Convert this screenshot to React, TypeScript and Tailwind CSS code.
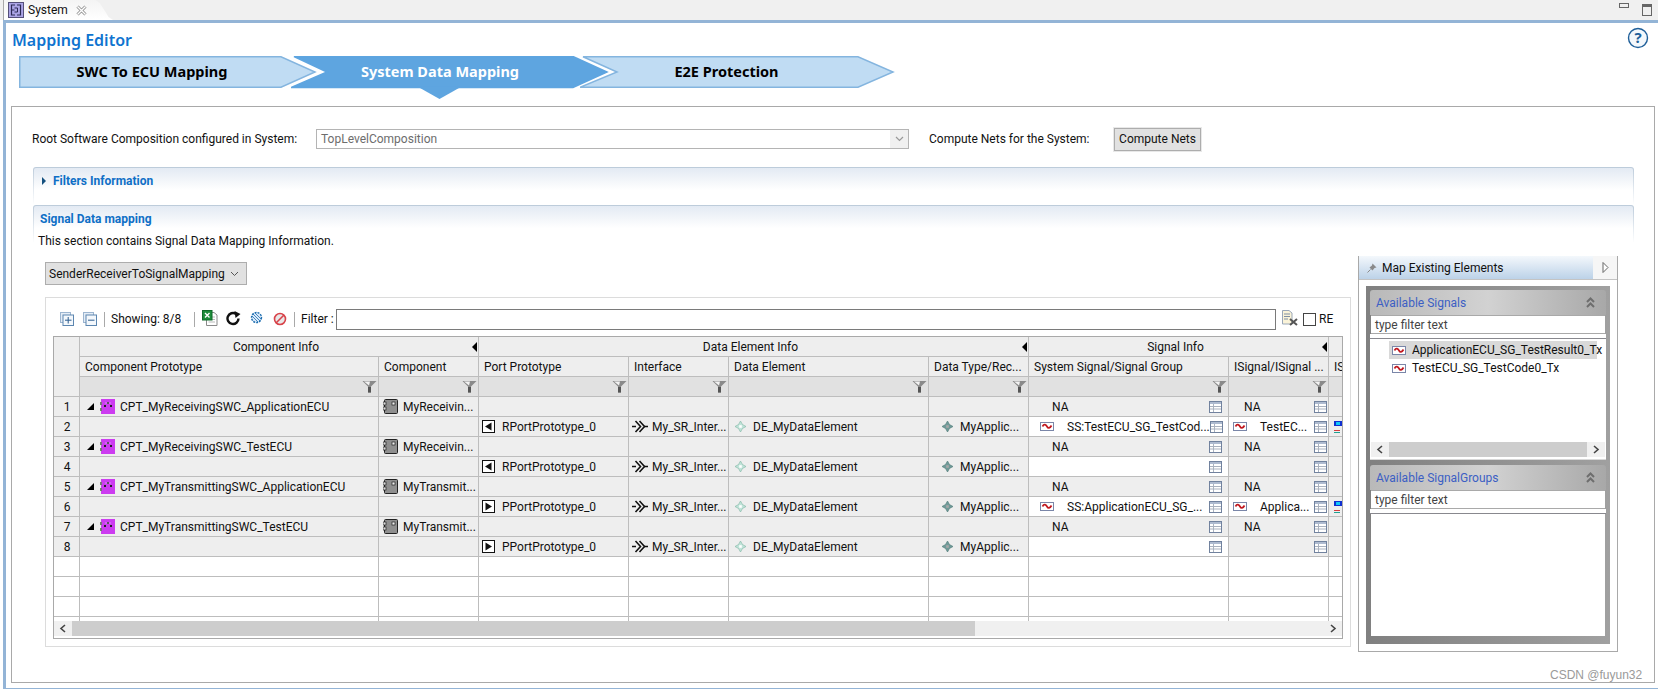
import React from "react";

const font = { fontFamily: 'Roboto, "Noto Sans", sans-serif' };
const headFont = { fontFamily: '"Noto Sans", Roboto, sans-serif' };

function Funnel() {
  return (
    <svg width="15" height="13" viewBox="0 0 15 13" className="shrink-0">
      <path d="M0.5 1 L14.5 1 L9 6.5 L9 12.5 L6 12.5 L6 6.5 Z" fill="#8a8a8a" />
      <path d="M2 1.5 L8 1.5 L7 5.5 Z" fill="#f2f2f2" />
      <path d="M6 7 L9 7 L9 12.5 L6 12.5 Z" fill="#555" />
    </svg>
  );
}

function TableIcon() {
  return (
    <svg width="13" height="12" viewBox="0 0 13 12" className="shrink-0">
      <rect x="0.5" y="0.5" width="12" height="11" fill="#fff" stroke="#71829e" />
      <rect x="1" y="1" width="11" height="2" fill="#aebbd0" />
      <path d="M1 5.5 H12 M1 8 H12 M4.5 3 V11" stroke="#aab2bf" strokeWidth="1" />
    </svg>
  );
}

function SignalIcon() {
  return (
    <svg width="14" height="9" viewBox="0 0 14 9" className="shrink-0">
      <rect x="0.5" y="0.5" width="13" height="8" fill="#fff" stroke="#7a86a8" />
      <path d="M2.5 4.5 C4 1.5 6 2.5 7 4.5 C8 6.5 10 6.5 11.5 3.5" fill="none" stroke="#c0181f" strokeWidth="1.7" />
    </svg>
  );
}

function SwcIcon() {
  return (
    <svg width="15" height="15" viewBox="0 0 15 15" className="shrink-0">
      <rect x="1" y="0" width="14" height="15" fill="#cc3cf0" />
      <rect x="0" y="3" width="2" height="3" fill="#777" />
      <rect x="0" y="9" width="2" height="3" fill="#777" />
      <rect x="7" y="3" width="2" height="2" fill="#222" />
      <rect x="4" y="6" width="2" height="2" fill="#222" />
      <rect x="10" y="6" width="2" height="2" fill="#222" />
      <path d="M5 4 H11" stroke="#f0c0ff" strokeWidth="0.6" />
    </svg>
  );
}

function ComponentIcon() {
  return (
    <svg width="15" height="15" viewBox="0 0 15 15" className="shrink-0">
      <rect x="1.5" y="0.5" width="13" height="14" rx="1" fill="#8f8f8f" stroke="#222" />
      <rect x="9" y="3" width="3" height="3" fill="#eee" stroke="#222" strokeWidth="0.7" />
      <rect x="0" y="3" width="3" height="3" fill="#ddd" stroke="#222" strokeWidth="0.7" />
      <rect x="0" y="8" width="3" height="3" fill="#ddd" stroke="#222" strokeWidth="0.7" />
    </svg>
  );
}

function PortIcon({ dir }: { dir: "l" | "r" }) {
  return (
    <svg width="13" height="13" viewBox="0 0 13 13" className="shrink-0">
      <rect x="0.5" y="0.5" width="12" height="12" fill="#fff" stroke="#111" />
      {dir === "l" ? <path d="M3 6.5 L9.5 2.5 V10.5 Z" fill="#111" /> : <path d="M10 6.5 L3.5 2.5 V10.5 Z" fill="#111" />}
    </svg>
  );
}

function InterfaceIcon() {
  return (
    <svg width="16" height="13" viewBox="0 0 16 13" className="shrink-0">
      <path d="M0 6.5 H4 M12 6.5 H16" stroke="#111" strokeWidth="1.4" />
      <path d="M3.5 1 L8.5 6.5 L3.5 12 M7.5 1 L12.5 6.5 L7.5 12" fill="none" stroke="#111" strokeWidth="1.6" />
    </svg>
  );
}

function Diamond({ dark }: { dark?: boolean }) {
  return (
    <svg width="11" height="11" viewBox="0 0 11 11" className="shrink-0">
      <path
        d="M5.5 0 L7.5 3.5 L11 5.5 L7.5 7.5 L5.5 11 L3.5 7.5 L0 5.5 L3.5 3.5 Z"
        fill={dark ? "#6f9a98" : "#bfe3d8"}
        stroke={dark ? "#4f7a78" : "#7fb5a5"}
        strokeWidth="0.6"
      />
      <rect x="4.2" y="4.2" width="2.6" height="2.6" fill={dark ? "#a8a8a8" : "#fff"} />
    </svg>
  );
}

function Chevrons({ className }: { className?: string }) {
  return (
    <svg width="9" height="11" viewBox="0 0 9 11" className={className}>
      <path d="M1 5 L4.5 1.5 L8 5 M1 10 L4.5 6.5 L8 10" fill="none" stroke="#6e6e6e" strokeWidth="2" />
    </svg>
  );
}

const columns = [
  { w: "w-[299px]", label: "Component Prototype" },
  { w: "w-[100px]", label: "Component" },
  { w: "w-[150px]", label: "Port Prototype" },
  { w: "w-[100px]", label: "Interface" },
  { w: "w-[200px]", label: "Data Element" },
  { w: "w-[100px]", label: "Data Type/Rec..." },
  { w: "w-[200px]", label: "System Signal/Signal Group" },
  { w: "w-[100px]", label: "ISignal/ISignal ..." },
  { w: "w-[14px]", label: "IS" },
];

function Cell({ w, children, white, className = "" }: { w: string; children?: React.ReactNode; white?: boolean; className?: string }) {
  return (
    <div
      className={`${w} h-full shrink-0 border-r border-[#bdbdbd] flex items-center overflow-hidden whitespace-nowrap ${white ? "bg-white" : ""} ${className}`}
    >
      {children}
    </div>
  );
}

type Row =
  | { kind: "comp"; n: number; name: string; comp: string; isig: boolean }
  | { kind: "port"; n: number; dir: "l" | "r"; port: string; sig?: string; isig?: string };

const rows: Row[] = [
  { kind: "comp", n: 1, name: "CPT_MyReceivingSWC_ApplicationECU", comp: "MyReceivin...", isig: true },
  { kind: "port", n: 2, dir: "l", port: "RPortPrototype_0", sig: "SS:TestECU_SG_TestCod...", isig: "TestEC..." },
  { kind: "comp", n: 3, name: "CPT_MyReceivingSWC_TestECU", comp: "MyReceivin...", isig: true },
  { kind: "port", n: 4, dir: "l", port: "RPortPrototype_0" },
  { kind: "comp", n: 5, name: "CPT_MyTransmittingSWC_ApplicationECU", comp: "MyTransmit...", isig: true },
  { kind: "port", n: 6, dir: "r", port: "PPortPrototype_0", sig: "SS:ApplicationECU_SG_...", isig: "Applica..." },
  { kind: "comp", n: 7, name: "CPT_MyTransmittingSWC_TestECU", comp: "MyTransmit...", isig: true },
  { kind: "port", n: 8, dir: "r", port: "PPortPrototype_0" },
];

function IsCell({ show }: { show: boolean }) {
  return (
    <Cell w="w-[14px]" className="border-r-0 pl-[5px]">
      {show && (
        <div className="flex flex-col gap-[4px]">
          <div className="w-[8px] h-[5px] bg-[#10c8f8] border-x-2 border-y border-[#1030d0]" />
          <div className="w-[6px] h-[3px] border-t border-t-[#d04040] border-b border-b-[#20a090]" />
        </div>
      )}
    </Cell>
  );
}

function DataRow({ r }: { r: Row }) {
  return (
    <div className="flex h-[20px] border-b border-[#bdbdbd] box-border">
      <div className="w-[26px] shrink-0 h-full border-r border-[#bdbdbd] flex items-center justify-center bg-[#eeeeee] pl-[1px]">{r.n}</div>
      {r.kind === "comp" ? (
        <>
          <Cell w={columns[0].w} className="pl-[6px]">
            <span className="w-0 h-0 border-l-[7px] border-l-transparent border-b-[7px] border-b-black mr-[6px] ml-[1px]" />
            <SwcIcon />
            <span className="ml-[5px]">{r.name}</span>
          </Cell>
          <Cell w={columns[1].w} className="pl-[4px]">
            <ComponentIcon />
            <span className="ml-[5px]">{r.comp}</span>
          </Cell>
          <Cell w={columns[2].w} />
          <Cell w={columns[3].w} />
          <Cell w={columns[4].w} />
          <Cell w={columns[5].w} />
          <Cell w={columns[6].w} className="justify-between pl-[23px] pr-[6px]">
            <span>NA</span>
            <TableIcon />
          </Cell>
          <Cell w={columns[7].w} className="justify-between pl-[15px] pr-[1px]">
            <span>NA</span>
            <TableIcon />
          </Cell>
          <IsCell show={false} />
        </>
      ) : (
        <>
          <Cell w={columns[0].w} />
          <Cell w={columns[1].w} />
          <Cell w={columns[2].w} className="pl-[3px]">
            <PortIcon dir={r.dir} />
            <span className="ml-[7px]">{r.port}</span>
          </Cell>
          <Cell w={columns[3].w} className="pl-[3px]">
            <InterfaceIcon />
            <span className="ml-[4px]">My_SR_Inter...</span>
          </Cell>
          <Cell w={columns[4].w} className="pl-[6px]">
            <Diamond />
            <span className="ml-[7px]">DE_MyDataElement</span>
          </Cell>
          <Cell w={columns[5].w} className="pl-[13px]">
            <Diamond dark />
            <span className="ml-[7px]">MyApplic...</span>
          </Cell>
          <Cell w={columns[6].w} white className="pl-[11px] pr-[6px]">
            {r.sig ? (
              <>
                <SignalIcon />
                <span className="ml-[13px] flex-1">{r.sig}</span>
              </>
            ) : (
              <span className="flex-1" />
            )}
            <TableIcon />
          </Cell>
          <Cell w={columns[7].w} white={!!r.isig} className="pl-[4px] pr-[1px]">
            {r.isig ? (
              <>
                <SignalIcon />
                <span className="ml-[13px] flex-1">{r.isig}</span>
              </>
            ) : (
              <span className="flex-1" />
            )}
            <TableIcon />
          </Cell>
          <IsCell show={!!r.sig} />
        </>
      )}
    </div>
  );
}

function EmptyRow({ h }: { h: string }) {
  return (
    <div className={`flex ${h} border-b border-[#bdbdbd] box-border bg-white`}>
      <div className="w-[26px] shrink-0 h-full border-r border-[#bdbdbd]" />
      {columns.map((c, i) => (
        <Cell key={i} w={c.w} className={i === 8 ? "border-r-0" : ""} />
      ))}
    </div>
  );
}

function GroupHead({ w, label }: { w: string; label: string }) {
  return (
    <div className={`${w} shrink-0 h-full border-r border-[#bdbdbd] flex items-center relative justify-center`}>
      <span className="mr-[6px]">{label}</span>
      <span className="absolute right-[1px] top-[5px] w-0 h-0 border-y-[5px] border-y-transparent border-r-[5px] border-r-black" />
    </div>
  );
}

function Scrollbar({ thumb, className = "" }: { thumb: string; className?: string }) {
  return (
    <div className={`flex items-center bg-[#f0f0f0] ${className}`}>
      <svg width="18" height="9" viewBox="0 0 18 9" className="shrink-0">
        <path d="M11 1 L7 4.5 L11 8" fill="none" stroke="#444" strokeWidth="1.6" />
      </svg>
      <div className="flex-1 h-full flex">
        <div className={`${thumb} h-full bg-[#cdcdcd]`} />
      </div>
      <svg width="18" height="9" viewBox="0 0 18 9" className="shrink-0">
        <path d="M7 1 L11 4.5 L7 8" fill="none" stroke="#444" strokeWidth="1.6" />
      </svg>
    </div>
  );
}

function Arrow({
  active,
  label,
  className,
  d,
  width,
  textW,
}: {
  active?: boolean;
  label: string;
  className: string;
  d: string;
  width: number;
  textW: string;
}) {
  const fill = active ? "#5ea5e0" : "#c0dcf3";
  const stroke = active ? "#5ea5e0" : "#84b5df";
  return (
    <div className={`${className} h-[44px] relative shrink-0`}>
      <svg width={width} height="44" viewBox={`0 0 ${width} 44`} className="absolute left-0 top-0">
        <path d={d} fill={fill} stroke={stroke} strokeWidth="1.5" />
        {active && <path d="M129 32 L168 32 L148.5 43 Z" fill={fill} />}
      </svg>
      <div
        className={`absolute left-0 top-0 h-[32px] flex items-center justify-center text-[14.5px] font-bold ${active ? "text-white" : "text-black"} ${textW}`}
        style={headFont}
      >
        {label}
      </div>
    </div>
  );
}

function SectionHead({ title, arrow }: { title: string; arrow?: boolean }) {
  return (
    <div className="h-[38px] ml-[21px] mr-[20px] pt-[1px] px-[1px] rounded-t-[3px] bg-gradient-to-b from-[#bccbda] to-white">
      <div className="h-full rounded-t-[2px] bg-gradient-to-b from-[#e3eaf3] to-white to-60% flex items-start">
        <div className="flex items-center h-[26px] pl-[8px] text-[#0f6fc6] font-bold">
          {arrow && <span className="w-0 h-0 border-y-[4px] border-y-transparent border-l-[4px] border-l-[#14507f] mr-[7px]" />}
          <span className={arrow ? "" : "ml-[-2px]"}>{title}</span>
        </div>
      </div>
    </div>
  );
}

function SidePanelSection({ title }: { title: string }) {
  return (
    <div className="flex flex-col">
      <div className="h-[25px] rounded-t-[3px] bg-gradient-to-r from-[#b9b9b9] via-[#d2d2d2] to-[#a8a8a8] flex items-center justify-between pl-[6px] pr-[11px] text-[#3c5fc4]">
        <span>{title}</span>
        <Chevrons />
      </div>
      <div className="h-[19px] bg-white border-y border-[#a9a9a9] mx-[1px] flex items-center pl-[4px] text-[#444]">type filter text</div>
      <div className="h-[5px] bg-white border-b border-[#88888e]" />
    </div>
  );
}

export default function App() {
  return (
    <div className="w-[1658px] h-[689px] bg-white overflow-hidden text-[12px] text-[#111] flex flex-col relative" style={font}>
      {/* editor tab strip */}
      <div className="h-[20px] bg-[#f0f0f0] flex items-end shrink-0 relative">
        <div className="h-[20px] w-[110px] ml-[3px] bg-gradient-to-b from-[#f4f4f4] to-white border-l border-[#a9a9a9] flex items-center pl-[4px] relative" style={{ clipPath: "polygon(0 0, 84% 0, 88% 15%, 96% 85%, 100% 100%, 0 100%)" }}>
          <svg width="16" height="16" viewBox="0 0 16 16" className="shrink-0">
            <rect x="0.5" y="0.5" width="15" height="15" fill="#aba4e6" stroke="#55507a" />
            <path d="M7 3 H3.5 V13 H7 M3.5 8 H6.5 M9 3 H12.5 V13 H9" fill="none" stroke="#2d2a55" strokeWidth="1.2" />
            <path d="M6.5 6 H9.5 V10 H6.5" fill="none" stroke="#2d2a55" />
          </svg>
          <span className="ml-[4px]">System</span>
          <svg width="11" height="11" viewBox="0 0 11 11" className="ml-[8px]">
            <path d="M1.5 1.5 L9.5 9.5 M9.5 1.5 L1.5 9.5" stroke="#8a8a8a" strokeWidth="3" />
            <path d="M1.5 1.5 L9.5 9.5 M9.5 1.5 L1.5 9.5" stroke="#fff" strokeWidth="1.4" />
          </svg>
        </div>
        <div className="ml-auto flex items-start h-full pt-[3px] pr-[6px] gap-[13px]">
          <div className="w-[10px] h-[5px] border border-[#666]" />
          <div className="w-[10px] h-[12px] border border-[#666] border-t-[3px] mt-[1px]" />
        </div>
      </div>

      {/* window body */}
      <div className="flex-1 border-l-[3px] border-t-[3px] border-b-[1px] border-[#93b4d6] ml-[3px] min-h-0 flex flex-col">
        <div className="flex items-start justify-between h-[30px] shrink-0">
          <div className="text-[16px] font-semibold text-[#0f74d0] ml-[6px] mt-[2px] leading-[30px]" style={headFont}>Mapping Editor</div>
          <svg width="22" height="22" viewBox="0 0 22 22" className="mr-[9px] mt-[4px]">
            <circle cx="11" cy="11" r="9.5" fill="#f4f8fc" stroke="#1f5f99" strokeWidth="1.4" />
            <text x="11" y="16" textAnchor="middle" fontSize="15" fontWeight="700" fill="#1f5f99" style={headFont}>?</text>
          </svg>
        </div>

        {/* breadcrumb arrows */}
        <div className="flex h-[44px] shrink-0 ml-[13px] mt-[3px]">
          <Arrow
            label="SWC To ECU Mapping"
            className="w-[272px]"
            width={300}
            textW="w-[266px]"
            d="M0.75 0.75 H262 L296 16 L262 31.25 H0.75 Z"
          />
          <Arrow
            active
            label="System Data Mapping"
            className="w-[289px]"
            width={320}
            textW="w-[298px]"
            d="M3 0.5 H282 L316 16 L282 31.5 H0 L36 16 Z"
          />
          <Arrow
            label="E2E Protection"
            className="w-[316px]"
            width={316}
            textW="w-[293px]"
            d="M3 0.75 H278 L313 16 L278 31.25 H0 L37 16 Z"
          />
        </div>

        {/* page frame */}
        <div className="ml-[5px] mr-[3px] mt-[6px] h-[577px] border border-[#a9a9a9] shrink-0 flex flex-col">
          <div className="flex items-center h-[20px] mt-[22px] pl-[20px] shrink-0">
            <span className="w-[284px] whitespace-nowrap">Root Software Composition configured in System:</span>
            <div className="w-[593px] h-[20px] border border-[#b4b4b4] flex items-center justify-between pl-[4px] text-[#6d6d6d]">
              <span>TopLevelComposition</span>
              <div className="w-[18px] h-full bg-[#f0f0f0] flex items-center justify-center">
                <svg width="9" height="6" viewBox="0 0 9 6">
                  <path d="M1 1 L4.5 4.5 L8 1" fill="none" stroke="#999" strokeWidth="1.2" />
                </svg>
              </div>
            </div>
            <span className="ml-[20px] w-[185px] whitespace-nowrap">Compute Nets for the System:</span>
            <div className="w-[87px] h-[23px] bg-[#e1e1e1] border border-[#adadad] outline outline-1 outline-[#e8e8e8] flex items-center justify-center">Compute Nets</div>
          </div>

          <div className="mt-[18px] shrink-0">
            <SectionHead title="Filters Information" arrow />
          </div>
          <SectionHead title="Signal Data mapping" />
          <div className="pl-[26px] mt-[-12px] h-[20px] flex items-center shrink-0">This section contains Signal Data Mapping Information.</div>

          {/* lower area */}
          <div className="flex flex-1 min-h-0 mt-[1px]">
            <div className="flex flex-col ml-[33px] w-[1306px] shrink-0">
              <div className="h-[23px] w-[202px] mt-[10px] bg-[#e1e1e1] border border-[#adadad] flex items-center justify-between px-[3px] pr-[7px] shrink-0">
                <span className="whitespace-nowrap">SenderReceiverToSignalMapping</span>
                <svg width="9" height="6" viewBox="0 0 9 6">
                  <path d="M1 1 L4.5 4.5 L8 1" fill="none" stroke="#555" strokeWidth="1" />
                </svg>
              </div>

              {/* table container */}
              <div className="mt-[12px] h-[350px] border border-[#dcdcdc] flex flex-col px-[7px] shrink-0">
                <div className="h-[38px] flex items-center shrink-0 pt-[4px] pl-[7px] whitespace-nowrap">
                  <svg width="14" height="14" viewBox="0 0 14 14" className="shrink-0">
                    <rect x="0.5" y="0.5" width="10" height="10" fill="#e5edf6" stroke="#9cb5d0" />
                    <rect x="3" y="3" width="10.5" height="10.5" fill="#f4f8fc" stroke="#5c86b0" />
                    <path d="M5 8.2 H11.5 M8.2 5 V11.5" stroke="#2a5c8f" />
                  </svg>
                  <svg width="14" height="14" viewBox="0 0 14 14" className="shrink-0 ml-[9px]">
                    <rect x="0.5" y="0.5" width="10" height="10" fill="#e5edf6" stroke="#9cb5d0" />
                    <rect x="3" y="3" width="10.5" height="10.5" fill="#f4f8fc" stroke="#5c86b0" />
                    <path d="M5 8.2 H11.5" stroke="#2a5c8f" />
                  </svg>
                  <div className="w-px h-[15px] bg-[#a9a9a9] ml-[7px] shrink-0" />
                  <span className="ml-[6px] w-[83px] shrink-0">Showing: 8/8</span>
                  <div className="w-px h-[15px] bg-[#a9a9a9] shrink-0" />
                  <svg width="16" height="16" viewBox="0 0 16 16" className="shrink-0 ml-[7px] mt-[-2px]">
                    <path d="M4.5 2.5 H12 L15 5 V15.5 H4.5 Z" fill="#fff" stroke="#8a8a8a" />
                    <path d="M6.5 7 H13 M6.5 9.5 H13 M6.5 12 H13" stroke="#b9b9b9" />
                    <rect x="0.5" y="0.5" width="9.5" height="9.5" fill="#1d8c3a" stroke="#0f6a28" />
                    <path d="M3 3 L7.5 7.5 M7.5 3 L3 7.5" stroke="#fff" strokeWidth="1.4" />
                  </svg>
                  <svg width="15" height="15" viewBox="0 0 15 15" className="shrink-0 ml-[8px] mt-[-2px]">
                    <path d="M12.5 7.5 A5.5 5.5 0 1 1 10 2.9" fill="none" stroke="#111" strokeWidth="2.4" />
                    <path d="M8.5 0 L14.5 3 L9.5 7 Z" fill="#111" />
                  </svg>
                  <svg width="13" height="13" viewBox="0 0 13 13" className="shrink-0 ml-[9px] mt-[-4px]">
                    <circle cx="6.5" cy="6.5" r="5" fill="#dbeafa" stroke="#1f6fb0" strokeDasharray="2 1" strokeWidth="1.4" />
                    <path d="M3 3 L10 10 M5 2 L11 8 M2 5 L8 11" stroke="#1f6fb0" strokeWidth="0.8" />
                  </svg>
                  <svg width="14" height="14" viewBox="0 0 14 14" className="shrink-0 ml-[10px]">
                    <circle cx="7" cy="7" r="5.5" fill="#e8e8e8" stroke="#d8434a" strokeWidth="1.6" />
                    <path d="M3 11 L11 3" stroke="#d8434a" strokeWidth="1.6" />
                  </svg>
                  <div className="w-px h-[15px] bg-[#a9a9a9] ml-[7px] shrink-0" />
                  <span className="ml-[6px] w-[35px] shrink-0">Filter :</span>
                  <div className="w-[940px] h-[21px] border border-[#7a7a7a] bg-white shrink-0" />
                  <svg width="16" height="16" viewBox="0 0 16 16" className="shrink-0 ml-[6px] mt-[-2px]">
                    <path d="M0.5 0.5 H7 L10 3 V14 H0.5 Z" fill="#faf3d8" stroke="#9aa7b8" />
                    <path d="M2 4 H8 M2 6.5 H8 M2 9 H6" stroke="#7f8fa5" />
                    <path d="M8 9 L15 15 M15 9 L8 15" stroke="#555" strokeWidth="2" />
                  </svg>
                  <div className="w-[13px] h-[13px] border border-[#444] ml-[5px] bg-white shrink-0" />
                  <span className="ml-[3px]">RE</span>
                </div>

                {/* table */}
                <div className="border border-[#a9a9a9] h-[303px] overflow-hidden bg-white shrink-0 w-[1290px] flex flex-col">
                  <div className="flex shrink-0 h-[60px] bg-[#eeeeee]">
                    <div className="w-[26px] shrink-0 border-r border-b border-[#bdbdbd]" />
                    <div className="flex flex-col">
                      <div className="flex h-[20px] border-b border-[#bdbdbd] box-border">
                        <GroupHead w="w-[399px]" label="Component Info" />
                        <GroupHead w="w-[550px]" label="Data Element Info" />
                        <GroupHead w="w-[300px]" label="Signal Info" />
                      </div>
                      <div className="flex h-[20px] border-b border-[#bdbdbd] box-border">
                        {columns.map((c, i) => (
                          <Cell key={i} w={c.w} className={`pl-[5px] ${i === 8 ? "border-r-0" : ""}`}>
                            {c.label}
                          </Cell>
                        ))}
                      </div>
                      <div className="flex h-[20px] border-b border-[#bdbdbd] box-border bg-[#e1e1e1]">
                        {columns.map((c, i) => (
                          <Cell key={i} w={c.w} className={`justify-end pr-[1px] ${i === 8 ? "border-r-0" : ""}`}>
                            {i < 8 && <Funnel />}
                          </Cell>
                        ))}
                      </div>
                    </div>
                  </div>
                  <div className="bg-[#eeeeee] shrink-0">
                    {rows.map((r) => (
                      <DataRow key={r.n} r={r} />
                    ))}
                  </div>
                  <EmptyRow h="h-[20px] shrink-0" />
                  <EmptyRow h="h-[20px] shrink-0" />
                  <EmptyRow h="h-[20px] shrink-0" />
                  <div className="flex h-[4px] shrink-0 bg-white">
                    <div className="w-[26px] shrink-0 h-full border-r border-[#bdbdbd]" />
                    {columns.map((c, i) => (
                      <Cell key={i} w={c.w} className={i === 8 ? "border-r-0" : ""} />
                    ))}
                  </div>
                  <Scrollbar thumb="w-[903px]" className="h-[15px] shrink-0" />
                </div>
              </div>
            </div>

            {/* map existing elements */}
            <div className="ml-[7px] mt-[4px] w-[260px] h-[396px] border-l border-b border-r border-[#a9a9a9] shrink-0 flex flex-col">
              <div className="flex h-[24px] shrink-0 border-b border-[#c4c4c4]">
                <div className="flex-1 bg-gradient-to-b from-[#f4f8fc] to-[#bcd2e8] flex items-center pl-[8px]">
                  <svg width="10" height="10" viewBox="0 0 10 10" className="shrink-0">
                    <path d="M5.5 0.5 L9.5 4.5 L7.5 5 L5.5 7.5 L2.5 4.5 L5 2.5 Z" fill="#8a8a8a" />
                    <path d="M3.5 6.5 L0.5 9.5" stroke="#8a8a8a" />
                  </svg>
                  <span className="ml-[5px]">Map Existing Elements</span>
                </div>
                <div className="w-[24px] bg-[#f6f6f6] flex items-center justify-center">
                  <svg width="7" height="11" viewBox="0 0 7 11">
                    <path d="M1 0.5 L6 5.5 L1 10.5 Z" fill="#fff" stroke="#666" />
                  </svg>
                </div>
              </div>
              <div className="mx-[7px] mt-[6px] h-[358px] bg-gradient-to-r from-[#808080] to-[#a0a0a0] p-[4px] flex flex-col shrink-0">
                <SidePanelSection title="Available Signals" />
                <div className="h-[121px] bg-white shrink-0 flex flex-col pt-[2px] border-b border-[#d8d8d8]">
                  <div className="ml-[19px] mr-[9px] h-[18px] bg-[#d9d9d9] flex items-center pl-[3px] whitespace-nowrap">
                    <SignalIcon />
                    <span className="ml-[6px]">ApplicationECU_SG_TestResult0_Tx</span>
                  </div>
                  <div className="ml-[19px] h-[18px] flex items-center pl-[3px]">
                    <SignalIcon />
                    <span className="ml-[6px]">TestECU_SG_TestCode0_Tx</span>
                  </div>
                  <Scrollbar thumb="w-full" className="h-[15px] mt-auto mb-[2px] mx-[1px]" />
                </div>
                <div className="h-[5px] shrink-0" />
                <SidePanelSection title="Available SignalGroups" />
                <div className="flex-1 bg-white mx-[1px] mb-[4px]" />
              </div>
            </div>
          </div>
        </div>
      </div>

      <div className="absolute left-[1550px] top-[666px] text-[#9a9a9a] text-[12px]" style={{ fontFamily: '"Liberation Sans", sans-serif' }}>CSDN @fuyun32</div>
    </div>
  );
}
